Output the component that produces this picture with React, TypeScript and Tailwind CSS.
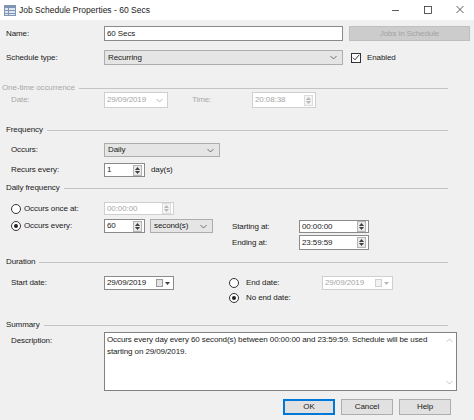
import React from 'react';

const Chevron = ({ color = '#606060' }: { color?: string }) => (
  <svg width="7" height="5" viewBox="0 0 7 5" className="shrink-0">
    <path d="M0.5 1 L3.5 4 L6.5 1" fill="none" stroke={color} strokeWidth="0.9" />
  </svg>
);

const Spinner = ({ disabled }: { disabled?: boolean }) => (
  <div
    className={`flex h-[11px] w-[9px] shrink-0 flex-col items-center justify-center gap-[1px] border ${
      disabled ? 'border-[#dcdcdc] bg-[#f4f4f4]' : 'border-[#b4b4b4] bg-[#e8e8e8]'
    }`}
  >
    <svg width="5" height="3" viewBox="0 0 5 3">
      <path d="M0 3 L2.5 0 L5 3 Z" fill={disabled ? '#b8b8b8' : '#404040'} />
    </svg>
    <svg width="5" height="3" viewBox="0 0 5 3">
      <path d="M0 0 L2.5 3 L5 0 Z" fill={disabled ? '#b8b8b8' : '#404040'} />
    </svg>
  </div>
);

function Field({
  className,
  value,
  disabled,
  spin,
  cal,
  chevron,
}: {
  className: string;
  value: string;
  disabled?: boolean;
  spin?: boolean;
  cal?: boolean;
  chevron?: boolean;
}) {
  return (
    <div
      className={`flex h-full shrink-0 items-center border bg-white pl-[2px] pr-[2px] ${
        disabled ? 'border-[#cfcfcf] text-[#a6a6a6]' : 'border-[#8a8a8a] text-[#1a1a1a]'
      } ${className}`}
    >
      <span className="flex-1 whitespace-nowrap">{value}</span>
      {spin && <Spinner disabled={disabled} />}
      {cal && (
        <div className="flex items-center gap-[2px] pr-[1px]">
          <div className={`h-[8px] w-[7px] border ${disabled ? 'border-[#d0d0d0] bg-[#f2f2f2]' : 'border-[#9a9a9a] bg-[#e4e4e4]'}`} />
          <svg width="5" height="3" viewBox="0 0 5 3">
            <path d="M0 0 L2.5 3 L5 0 Z" fill={disabled ? '#b8b8b8' : '#404040'} />
          </svg>
        </div>
      )}
      {chevron && (
        <div className="pr-[2px]">
          <Chevron color="#b0b0b0" />
        </div>
      )}
    </div>
  );
}

function Combo({ className, value }: { className: string; value: string }) {
  return (
    <div
      className={`flex h-full shrink-0 items-center border border-[#adadad] bg-[#e5e5e5] pl-[3px] pr-[5px] text-[#1a1a1a] ${className}`}
    >
      <span className="flex-1 whitespace-nowrap">{value}</span>
      <Chevron />
    </div>
  );
}

const Radio = ({ checked }: { checked?: boolean }) => (
  <div className="flex h-[10px] w-[10px] shrink-0 items-center justify-center rounded-full border border-[#333] bg-white">
    {checked && <div className="h-[4px] w-[4px] rounded-full bg-[#222]" />}
  </div>
);

function Section({ title, className, disabled }: { title: string; className: string; disabled?: boolean }) {
  return (
    <div className={`flex h-[8px] shrink-0 items-center gap-[4px] pr-[26px] ${className}`}>
      <span className={`whitespace-nowrap leading-[8px] ${disabled ? 'text-[#a8a8a8]' : 'text-[#1a1a1a]'}`}>{title}</span>
      <div className="h-px flex-1 bg-[#c4c4c4]" />
    </div>
  );
}

const Btn = ({ label, primary }: { label: string; primary?: boolean }) => (
  <div
    className={`flex h-[16px] w-[52px] items-center justify-center bg-[#e1e1e1] text-[#1a1a1a] ${
      primary ? 'border-2 border-[#0078d7]' : 'border border-[#adadad]'
    }`}
  >
    {label}
  </div>
);

export default function App() {
  return (
    <div className="flex h-[420px] w-[474px] flex-col overflow-hidden bg-[#f0f0f0] font-['Liberation_Sans',Arial,sans-serif] text-[8px] tracking-[-0.1px] text-[#1a1a1a]">
      {/* title bar */}
      <div className="flex h-[20px] shrink-0 items-center bg-white">
        <svg width="12" height="11" viewBox="0 0 12 11" className="ml-[4px]">
          <rect x="0" y="0" width="12" height="11" fill="#7f95b3" />
          <rect x="1" y="3" width="3" height="2" fill="#dfe6ef" />
          <rect x="5" y="3" width="6" height="2" fill="#dfe6ef" />
          <rect x="1" y="6" width="3" height="2" fill="#dfe6ef" />
          <rect x="5" y="6" width="6" height="2" fill="#dfe6ef" />
          <rect x="1" y="9" width="3" height="1" fill="#dfe6ef" />
          <rect x="5" y="9" width="6" height="1" fill="#dfe6ef" />
        </svg>
        <span className="ml-[3px] text-[8.5px] tracking-normal text-[#1a1a1a]">Job Schedule Properties - 60 Secs</span>
        <div className="ml-auto flex items-center">
          <svg width="32" height="10" viewBox="0 0 32 10">
            <path d="M0 5.5 H7" stroke="#333" strokeWidth="0.8" />
          </svg>
          <svg width="32" height="10" viewBox="0 0 32 10">
            <rect x="0.5" y="1.5" width="7" height="7" fill="none" stroke="#333" strokeWidth="0.8" />
          </svg>
          <svg width="18" height="10" viewBox="0 0 18 10">
            <path d="M0.5 1 L7.5 8 M7.5 1 L0.5 8" stroke="#333" strokeWidth="0.8" />
          </svg>
        </div>
      </div>

      {/* name */}
      <div className="mt-[6px] flex h-[15px] shrink-0 items-center">
        <span className="w-[104px] pl-[6px]">Name:</span>
        <Field className="w-[239px]" value="60 Secs" />
        <div className="ml-[6px] flex h-full w-[121px] items-center justify-center border border-[#bfbfbf] bg-[#cccccc] text-[#a3a3a3]">
          Jobs in Schedule
        </div>
      </div>

      {/* schedule type */}
      <div className="mt-[9px] flex h-[15px] shrink-0 items-center">
        <span className="w-[104px] pl-[6px]">Schedule type:</span>
        <Combo className="w-[239px]" value="Recurring" />
        <div className="ml-[8px] flex h-[10px] w-[10px] items-center justify-center border border-[#333] bg-white">
          <svg width="8" height="7" viewBox="0 0 8 7">
            <path d="M0.8 3.6 L3 5.8 L7.2 0.8" fill="none" stroke="#222" strokeWidth="0.9" />
          </svg>
        </div>
        <span className="ml-[6px]">Enabled</span>
      </div>

      {/* one-time */}
      <Section title="One-time occurrence" className="mt-[19px] pl-[2px]" disabled />
      <div className="flex h-[16px] shrink-0 items-center text-[#a8a8a8]">
        <span className="w-[104px] pl-[11px]">Date:</span>
        <Field className="w-[64px]" value="29/09/2019" disabled chevron />
        <span className="ml-[24px] w-[60px]">Time:</span>
        <Field className="w-[64px]" value="20:08:38" disabled spin />
      </div>

      {/* frequency */}
      <Section title="Frequency" className="mt-[18px] pl-[6px]" />
      <div className="mt-[9px] flex h-[14px] shrink-0 items-center">
        <span className="w-[104px] pl-[11px]">Occurs:</span>
        <Combo className="w-[116px]" value="Daily" />
      </div>
      <div className="mt-[6px] flex h-[14px] shrink-0 items-center">
        <span className="w-[104px] pl-[11px]">Recurs every:</span>
        <Field className="w-[41px]" value="1" spin />
        <span className="ml-[6px]">day(s)</span>
      </div>

      {/* daily frequency */}
      <Section title="Daily frequency" className="mt-[7px] pl-[6px]" />
      <div className="mt-[10px] flex h-[13px] shrink-0 items-center">
        <div className="flex w-[104px] items-center gap-[3px] pl-[11px]">
          <Radio />
          <span>Occurs once at:</span>
        </div>
        <Field className="w-[70px]" value="00:00:00" disabled spin />
      </div>
      <div className="mt-[4px] flex shrink-0 items-start">
        <div className="flex h-[14px] items-center">
          <div className="flex w-[104px] items-center gap-[3px] pl-[11px]">
            <Radio checked />
            <span>Occurs every:</span>
          </div>
          <Field className="w-[41px]" value="60" spin />
          <Combo className="ml-[5px] w-[63px]" value="second(s)" />
        </div>
        <div className="ml-[19px] mt-[1px] flex flex-col">
          <div className="flex h-[13px] items-center">
            <span className="w-[67px]">Starting at:</span>
            <Field className="w-[70px]" value="00:00:00" spin />
          </div>
          <div className="mt-[2px] flex h-[15px] items-center">
            <span className="w-[67px]">Ending at:</span>
            <Field className="w-[70px]" value="23:59:59" spin />
          </div>
        </div>
      </div>

      {/* duration */}
      <Section title="Duration" className="mt-[8px] pl-[6px]" />
      <div className="mt-[10px] flex shrink-0 items-start">
        <div className="flex h-[14px] items-center">
          <span className="w-[104px] pl-[11px]">Start date:</span>
          <Field className="w-[70px]" value="29/09/2019" cal />
        </div>
        <div className="ml-[55px] flex flex-col">
          <div className="flex h-[14px] items-center">
            <div className="flex w-[93px] items-center gap-[7px]">
              <Radio />
              <span>End date:</span>
            </div>
            <Field className="w-[71px]" value="29/09/2019" disabled cal />
          </div>
          <div className="mt-[1px] flex h-[13px] items-center gap-[7px]">
            <Radio checked />
            <span>No end date:</span>
          </div>
        </div>
      </div>

      {/* summary */}
      <Section title="Summary" className="mt-[17px] pl-[6px]" />
      <div className="mt-[3px] flex h-[59px] shrink-0 items-start">
        <span className="w-[104px] pl-[11px] pt-[3px]">Description:</span>
        <div className="flex h-full w-[353px] border border-[#828282] bg-white">
          <div className="flex-1 whitespace-nowrap pl-[2px] pt-[1px] leading-[12px]">
            Occurs every day every 60 second(s) between 00:00:00 and 23:59:59. Schedule will be used
            <br />
            starting on 29/09/2019.
          </div>
          <div className="flex w-[13px] flex-col items-center justify-between py-[5px]">
            <svg width="7" height="5" viewBox="0 0 7 5">
              <path d="M0.5 4 L3.5 1 L6.5 4" fill="none" stroke="#c0c0c0" strokeWidth="0.9" />
            </svg>
            <Chevron color="#c0c0c0" />
          </div>
        </div>
      </div>

      {/* buttons */}
      <div className="mt-[8px] flex shrink-0 justify-end gap-[6px] pr-[23px]">
        <Btn label="OK" primary />
        <Btn label="Cancel" />
        <Btn label="Help" />
      </div>
    </div>
  );
}
